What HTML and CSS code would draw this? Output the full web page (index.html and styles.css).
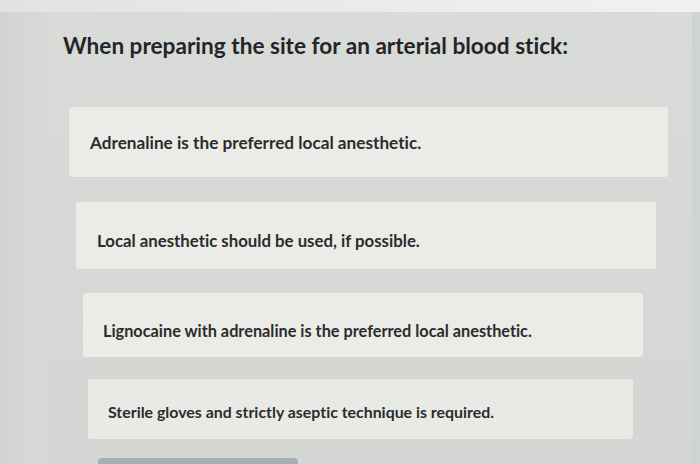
FILE: index.html
```html
<!DOCTYPE html>
<html>
<head>
<meta charset="utf-8">
<link rel="stylesheet" href="styles.css">
</head>
<body>
<div class="topstrip"></div>
<div class="screen">
  <div class="edge"></div>
  <main class="quiz">
    <h1 class="question">When preparing the site for an arterial blood stick:</h1>
    <div class="options">
      <div class="option o1">Adrenaline is the preferred local anesthetic.</div>
      <div class="option o2">Local anesthetic should be used, if possible.</div>
      <div class="option o3">Lignocaine with adrenaline is the preferred local anesthetic.</div>
      <div class="option o4">Sterile gloves and strictly aseptic technique is required.</div>
    </div>
    <div class="button-peek"></div>
  </main>
  <div class="bezel"></div>
</div>
</body>
</html>
```
FILE: styles.css
```css
html, body {
  margin: 0;
  padding: 0;
  width: 700px;
  height: 464px;
  overflow: hidden;
}
body {
  background: #d6d9d6;
  font-family: Lato, "Open Sans", sans-serif;
  font-variant-ligatures: none;
  color: #2a2a2c;
  display: flex;
  flex-direction: column;
}
.topstrip {
  height: 12px;
  flex: none;
  background: linear-gradient(90deg, #e2e3e1, #ececea 60%, #f1f1ef);
}
.screen {
  flex: 1;
  display: flex;
  background: linear-gradient(180deg, #d9dbd9, #d3d6d3);
}
.edge {
  width: 48px;
  flex: none;
  background: linear-gradient(90deg, #d1d4d1, #d7dad7);
}
.bezel {
  width: 8px;
  flex: none;
  background: #cfd3d1;
}
.quiz {
  flex: 1;
  display: flex;
  flex-direction: column;
}
.question {
  margin: 20px 0 0 15px;
  font-size: 22.6px;
  line-height: 28px;
  font-weight: 700;
  color: #252527;
}
.options {
  margin-top: 47px;
  display: flex;
  flex-direction: column;
}
.option {
  box-sizing: border-box;
  background: #ebebe7;
  border-radius: 3px;
  font-weight: 700;
  color: #2c2c2e;
  display: flex;
  align-items: center;
  padding-left: 21px;
}
.o1 { margin: 0 24px 0 21px; height: 70px; font-size: 17.2px; }
.o2 { margin: 25px 36px 0 28px; height: 67px; padding-top: 10px; font-size: 16.8px; }
.o3 { margin: 24px 49px 0 35px; height: 64px; padding: 10px 0 0 20px; font-size: 16.3px; }
.o4 { margin: 22px 59px 0 40px; height: 60px; padding: 4px 0 0 20px; font-size: 15.9px; background: #e9eae6; }
.button-peek {
  margin: 19px 0 0 50px;
  width: 200px;
  height: 10px;
  flex: none;
  background: #a3aeb5;
  border-radius: 4px 4px 0 0;
}
```
